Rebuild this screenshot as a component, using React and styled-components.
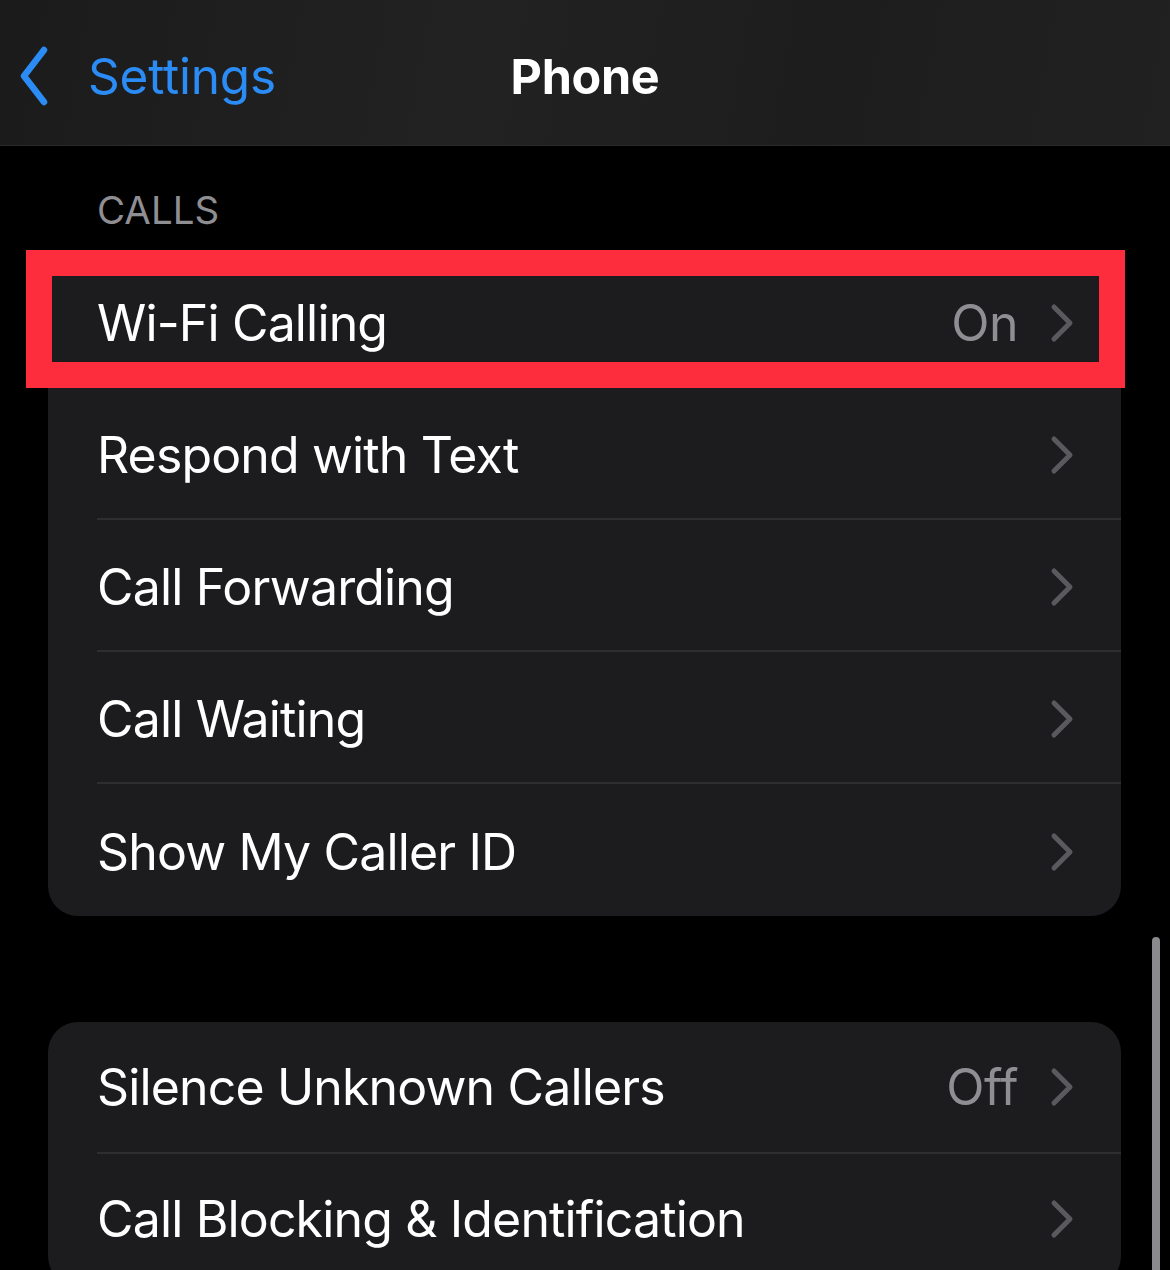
import React from "react";
import styled, { createGlobalStyle } from "styled-components";

const GlobalStyle = createGlobalStyle`
  html, body {
    margin: 0;
    padding: 0;
    background: #000000;
  }
  body {
    font-family: Inter, "Liberation Sans", sans-serif;
    -webkit-font-smoothing: antialiased;
  }
`;

const Screen = styled.div`
  position: relative;
  width: 1170px;
  height: 1270px;
  overflow: hidden;
  background: #000000;
  display: flex;
  flex-direction: column;
`;

const NavBar = styled.header`
  height: 146px;
  box-sizing: border-box;
  padding-top: 7px;
  flex-shrink: 0;
  display: grid;
  grid-template-columns: 1fr auto 1fr;
  align-items: center;
  background: linear-gradient(100deg, #1b1b1b 0%, #222222 40%, #1d1d1d 70%, #212121 100%);
  border-bottom: 1px solid #2a2a2a;
`;

const BackButton = styled.div`
  display: flex;
  align-items: center;
  gap: 40px;
  padding-left: 20px;
  color: #2a8cf4;
  font-size: 49.5px;
  letter-spacing: -0.2px;
`;

const Title = styled.h1`
  margin: 0;
  color: #ffffff;
  font-size: 48.5px;
  font-weight: 700;
  letter-spacing: -0.3px;
`;

const Content = styled.main`
  display: flex;
  flex-direction: column;
  padding: 0 49px 0 48px;
`;

const SectionHeader = styled.div`
  padding: 45px 0 0 49px;
  height: 65px;
  color: #8e8e93;
  font-size: 38.5px;
  letter-spacing: 0;
  line-height: 1;
`;

const Card = styled.section`
  background: #1c1c1e;
  border-radius: 30px;
  margin-top: ${({ $gap }) => $gap || 0}px;
`;

const Row = styled.div`
  position: relative;
  padding-left: 49px;
  height: 132px;
`;

const RowInner = styled.div`
  height: 100%;
  box-sizing: border-box;
  display: flex;
  align-items: center;
  padding-right: 47px;
  padding-top: ${({ $nudge }) => $nudge || 0}px;
  border-bottom: ${({ $last }) => ($last ? "none" : "2px solid #2e2e31")};
`;

const Label = styled.span`
  flex: 1;
  color: #ffffff;
  font-size: 50px;
  letter-spacing: -0.85px;
`;

const Value = styled.span`
  color: #8e8e93;
  font-size: 50px;
  letter-spacing: -0.5px;
  margin-right: 32px;
`;

const Highlight = styled.div`
  position: absolute;
  top: -6px;
  left: -22px;
  right: -4px;
  height: 138px;
  box-sizing: border-box;
  border: 26px solid #fe2d3e;
  pointer-events: none;
`;

const ScrollThumb = styled.div`
  position: absolute;
  left: 1152px;
  top: 937px;
  width: 8px;
  height: 400px;
  border-radius: 4px;
  background: #8a8a8c;
`;

const Chevron = () => (
  <svg width="24" height="40" viewBox="0 0 24 40">
    <path
      d="M4 4 L20 20 L4 36"
      fill="none"
      stroke="#5a5a5e"
      strokeWidth="5"
      strokeLinecap="round"
      strokeLinejoin="round"
    />
  </svg>
);

const BackChevron = () => (
  <svg width="28" height="60" viewBox="0 0 28 60">
    <path
      d="M24 4 L4 30 L24 56"
      fill="none"
      stroke="#2a8cf4"
      strokeWidth="6.5"
      strokeLinecap="round"
      strokeLinejoin="round"
    />
  </svg>
);

const callRows = [
  { label: "Wi-Fi Calling", value: "On", highlight: true },
  { label: "Respond with Text" },
  { label: "Call Forwarding" },
  { label: "Call Waiting" },
  { label: "Show My Caller ID" },
];

const blockRows = [
  { label: "Silence Unknown Callers", value: "Off" },
  { label: "Call Blocking & Identification" },
];

const SettingsRow = ({ item, last, nudge }) => (
  <Row>
    <RowInner $last={last} $nudge={nudge}>
      <Label>{item.label}</Label>
      {item.value && <Value>{item.value}</Value>}
      <Chevron />
    </RowInner>
    {item.highlight && <Highlight />}
  </Row>
);

export default function App() {
  return (
    <>
      <GlobalStyle />
      <Screen>
        <NavBar>
          <BackButton>
            <BackChevron />
            <span>Settings</span>
          </BackButton>
          <Title>Phone</Title>
          <div />
        </NavBar>
        <Content>
          <SectionHeader>CALLS</SectionHeader>
          <Card>
            {callRows.map((item, i) => (
              <SettingsRow
                key={item.label}
                item={item}
                nudge={3}
                last={i === callRows.length - 1}
              />
            ))}
          </Card>
          <Card $gap={106}>
            {blockRows.map((item) => (
              <SettingsRow key={item.label} item={item} last={false} />
            ))}
          </Card>
        </Content>
        <ScrollThumb />
      </Screen>
    </>
  );
}
